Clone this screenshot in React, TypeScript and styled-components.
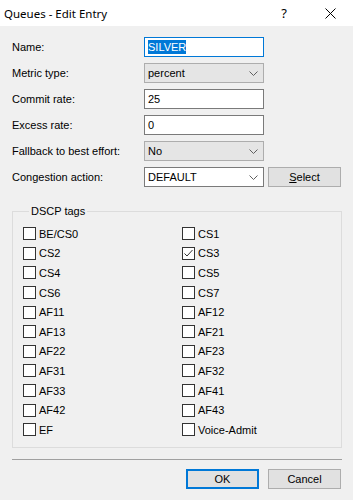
import React, { FC } from "react";
import styled, { createGlobalStyle } from "styled-components";

const GlobalStyle = createGlobalStyle`
  html, body {
    margin: 0;
    padding: 0;
    background: #f0f0f0;
  }
  body {
    font-family: "Liberation Sans", Arial, sans-serif;
    font-size: 11px;
    color: #000000;
  }
`;

const Window = styled.div`
  width: 353px;
  height: 500px;
  background: #f0f0f0;
  display: flex;
  flex-direction: column;
  overflow: hidden;
`;

const TitleBar = styled.div`
  height: 26px;
  background: #ffffff;
  display: flex;
  align-items: center;
  padding-left: 4px;
`;

const Title = styled.div`
  flex: 1;
  font-family: "Noto Sans", "Open Sans", sans-serif;
  font-size: 11.5px;
  color: #000000;
`;

const TitleButton = styled.div`
  width: 46px;
  height: 26px;
  display: flex;
  align-items: center;
  justify-content: center;
  font-family: "Noto Sans", sans-serif;
  font-size: 13px;
  color: #000000;
`;

const Body = styled.div`
  padding: 11px 11px 0 12px;
  display: flex;
  flex-direction: column;
`;

const Form = styled.div`
  display: flex;
  flex-direction: column;
  gap: 6px;
`;

const Row = styled.div`
  display: flex;
  align-items: center;
  height: 20px;
`;

const Label = styled.div`
  width: 132px;
`;

const Field = styled.div<{ $variant?: "input" | "focus" | "list" | "combo" }>`
  width: 120px;
  height: 20px;
  box-sizing: border-box;
  display: flex;
  align-items: center;
  padding-left: 3px;
  border: 1px solid
    ${(p) =>
      p.$variant === "focus"
        ? "#0078d7"
        : p.$variant === "list"
        ? "#adadad"
        : "#7a7a7a"};
  background: ${(p) => (p.$variant === "list" ? "#e5e5e5" : "#ffffff")};
`;

const FieldText = styled.span`
  flex: 1;
`;

const Selected = styled.span`
  background: #0078d7;
  color: #ffffff;
  padding: 1px 0;
`;

const Chevron = styled.svg`
  width: 9px;
  height: 5px;
  margin-right: 5px;
`;

const Button = styled.div<{ $default?: boolean }>`
  width: 73px;
  height: 20px;
  box-sizing: border-box;
  display: flex;
  align-items: center;
  justify-content: center;
  background: #e1e1e1;
  border: ${(p) => (p.$default ? "2px solid #0078d7" : "1px solid #adadad")};
`;

const SideButton = styled(Button)`
  margin-left: 4px;
`;

const Underline = styled.span`
  text-decoration: underline;
`;

const Group = styled.fieldset`
  margin: 18px 0 0 0;
  width: 330px;
  box-sizing: border-box;
  border: 1px solid #dcdcdc;
  padding: 6px 0 7px 10px;
  display: grid;
  grid-template-columns: 159px 1fr;
  grid-auto-rows: 19.6px;
`;

const Legend = styled.legend`
  margin-left: 6px;
  padding: 0 2px;
  line-height: 13px;
`;

const CheckItem = styled.label`
  display: flex;
  align-items: center;
  gap: 3px;
`;

const Box = styled.span`
  width: 13px;
  height: 13px;
  box-sizing: border-box;
  border: 1px solid #333333;
  background: #ffffff;
  display: flex;
  align-items: center;
  justify-content: center;
`;

const Separator = styled.div`
  width: 330px;
  height: 1px;
  background: #a0a0a0;
  margin-top: 11px;
`;

const Footer = styled.div`
  display: flex;
  justify-content: flex-end;
  gap: 9px;
  margin-top: 9px;
  width: 329px;
`;

const ChevronIcon: FC = () => (
  <Chevron viewBox="0 0 9 5">
    <path d="M0.5 0.5 L4.5 4.5 L8.5 0.5" fill="none" stroke="#606060" strokeWidth="1" />
  </Chevron>
);

const CheckBox: FC<{ label: string; checked?: boolean }> = ({ label, checked }) => (
  <CheckItem>
    <Box>
      {checked && (
        <svg width="11" height="11" viewBox="0 0 11 11">
          <path d="M1.5 5.5 L4 8 L9.5 2" fill="none" stroke="#333333" strokeWidth="1" />
        </svg>
      )}
    </Box>
    {label}
  </CheckItem>
);

const tags: [string, boolean][] = [
  ["BE/CS0", false], ["CS1", false],
  ["CS2", false], ["CS3", true],
  ["CS4", false], ["CS5", false],
  ["CS6", false], ["CS7", false],
  ["AF11", false], ["AF12", false],
  ["AF13", false], ["AF21", false],
  ["AF22", false], ["AF23", false],
  ["AF31", false], ["AF32", false],
  ["AF33", false], ["AF41", false],
  ["AF42", false], ["AF43", false],
  ["EF", false], ["Voice-Admit", false],
];

const App: FC = () => (
  <Window>
    <GlobalStyle />
    <TitleBar>
      <Title>Queues - Edit Entry</Title>
      <TitleButton>?</TitleButton>
      <TitleButton>
        <svg width="11" height="11" viewBox="0 0 11 11">
          <path d="M0.5 0.5 L10.5 10.5 M10.5 0.5 L0.5 10.5" stroke="#000000" strokeWidth="1" />
        </svg>
      </TitleButton>
    </TitleBar>
    <Body>
      <Form>
        <Row>
          <Label>Name:</Label>
          <Field $variant="focus">
            <FieldText>
              <Selected>SILVER</Selected>
            </FieldText>
          </Field>
        </Row>
        <Row>
          <Label>Metric type:</Label>
          <Field $variant="list">
            <FieldText>percent</FieldText>
            <ChevronIcon />
          </Field>
        </Row>
        <Row>
          <Label>Commit rate:</Label>
          <Field $variant="input">
            <FieldText>25</FieldText>
          </Field>
        </Row>
        <Row>
          <Label>Excess rate:</Label>
          <Field $variant="input">
            <FieldText>0</FieldText>
          </Field>
        </Row>
        <Row>
          <Label>Fallback to best effort:</Label>
          <Field $variant="list">
            <FieldText>No</FieldText>
            <ChevronIcon />
          </Field>
        </Row>
        <Row>
          <Label>Congestion action:</Label>
          <Field $variant="combo">
            <FieldText>DEFAULT</FieldText>
            <ChevronIcon />
          </Field>
          <SideButton>
            <Underline>S</Underline>elect
          </SideButton>
        </Row>
      </Form>
      <Group>
        <Legend>DSCP tags</Legend>
        {tags.map(([label, checked]) => (
          <CheckBox key={label} label={label} checked={checked} />
        ))}
      </Group>
      <Separator />
      <Footer>
        <Button $default>OK</Button>
        <Button>Cancel</Button>
      </Footer>
    </Body>
  </Window>
);

export default App;
